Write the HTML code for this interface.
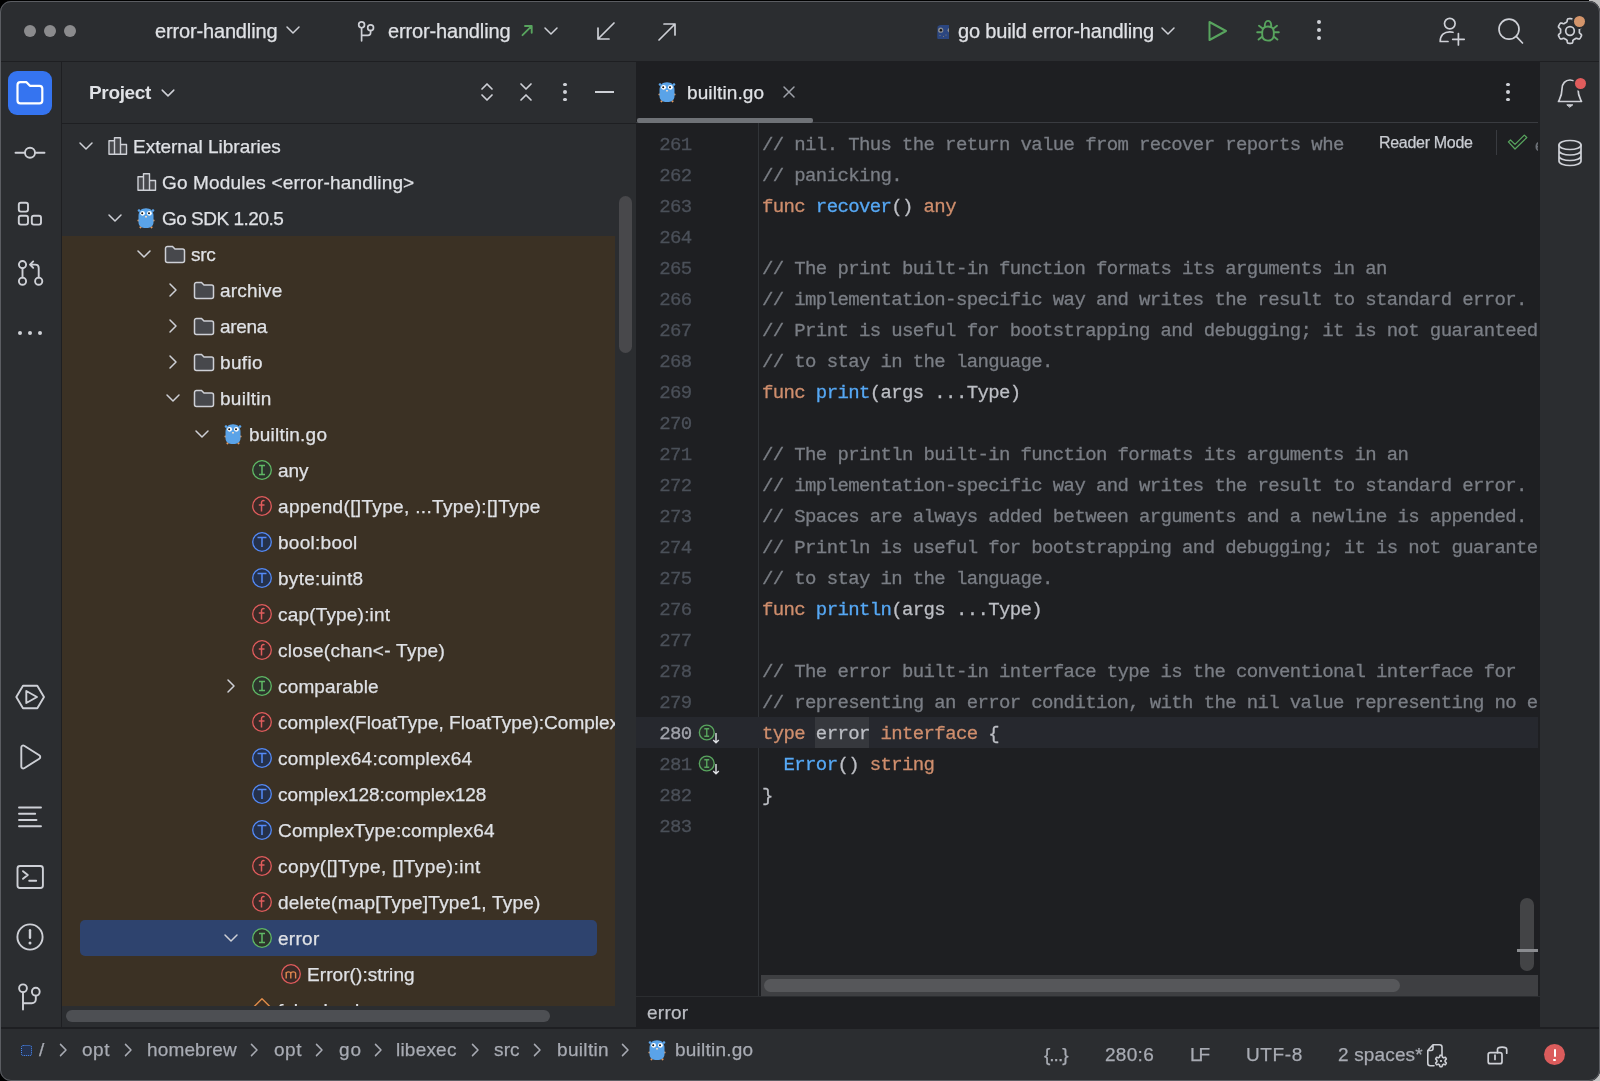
<!DOCTYPE html><html><head><meta charset="utf-8"><style>
*{margin:0;padding:0;box-sizing:border-box}
html,body{width:1600px;height:1081px;overflow:hidden;background:#000}
body{font-family:"Liberation Sans",sans-serif;color:#dfe1e5;position:relative}
.a{position:absolute}
#win{position:absolute;left:0;top:1px;width:1600px;height:1080px;background:#2b2d30;border-radius:11px;overflow:hidden}
#bord{position:absolute;left:0;top:1px;width:1600px;height:1080px;border:1px solid #5b5d62;border-radius:11px;pointer-events:none}
.ui{position:absolute;font-size:19px;white-space:nowrap;line-height:24px;will-change:transform;-webkit-text-stroke:0.25px currentColor}
.mono{font-family:"Liberation Mono",monospace;font-size:19px;letter-spacing:-0.63px;white-space:pre;line-height:31px;will-change:transform;-webkit-text-stroke:0.3px currentColor}
svg{position:absolute;overflow:visible}
.ic{fill:none;stroke:#ced0d6;stroke-width:1.7;stroke-linecap:round;stroke-linejoin:round}
.cm{color:#7a7e85}.kw{color:#cf8e6d}.fn{color:#56a8f5}.tx{color:#bcbec4}
</style></head><body><div style="position:absolute;left:1589px;top:0;width:11px;height:12px;background:#bdbdbd"></div><div style="position:absolute;left:1588px;top:1069px;width:12px;height:12px;background:#c4c4c4"></div><div id="win"><div style="position:absolute;left:0;top:-1px;width:1600px;height:1081px">
<div class="a" style="left:0;top:0;width:1600px;height:61px;background:#2b2d30"></div>
<div class="a" style="left:0;top:61px;width:1600px;height:1px;background:#1e1f22"></div>
<div class="a" style="left:24px;top:25px;width:12px;height:12px;border-radius:6px;background:#8b8b8d"></div>
<div class="a" style="left:44px;top:25px;width:12px;height:12px;border-radius:6px;background:#8b8b8d"></div>
<div class="a" style="left:64px;top:25px;width:12px;height:12px;border-radius:6px;background:#8b8b8d"></div>
<div class="ui" id="t52ea0517" style="left:155px;top:18.07px;font-size:20px;line-height:26px;color:#dfe1e5;font-weight:normal;letter-spacing:-0.154px;">error-handling</div>
<svg class="ic" style="left:283px;top:20px;" width="20" height="20" viewBox="0 0 20 20"><path d="M4 7.0 L10 13.0 L16 7.0" stroke="#ced0d6" stroke-width="1.5"/></svg>
<svg class="ic" style="left:356px;top:20px;" width="22" height="22" viewBox="0 0 22 22"><circle cx="5.6" cy="4.85" r="2.9"/><circle cx="14.6" cy="7.8" r="2.9"/><path d="M5.6 7.75 V20.8 M14.6 10.7 V12.8 C14.6 14.4 13.6 15.4 12 15.4 H5.6"/></svg>
<div class="ui" id="te1d7c44e" style="left:388px;top:18.07px;font-size:20px;line-height:26px;color:#dfe1e5;font-weight:normal;letter-spacing:-0.154px;">error-handling</div>
<svg class="ic" style="left:516px;top:20px;" width="20" height="20" viewBox="0 0 20 20"><path d="M6.5 15.2 L15.5 6.2 M9 6 H15.7 V12.7" stroke="#58a45e" stroke-width="1.9"/></svg>
<svg class="ic" style="left:541.25px;top:21px;" width="20" height="20" viewBox="0 0 20 20"><path d="M4 7.0 L10 13.0 L16 7.0" stroke="#ced0d6" stroke-width="1.5"/></svg>
<svg class="ic" style="left:594px;top:20px;" width="24" height="24" viewBox="0 0 24 24"><path d="M20 3 L4 19 M4 8 V19 H15"/></svg>
<svg class="ic" style="left:655px;top:20px;" width="24" height="24" viewBox="0 0 24 24"><path d="M4 20 L20 4 M9 4 H20 V15"/></svg>
<svg class="" style="left:930px;top:18px;" width="26" height="26" viewBox="0 0 26 26"><path d="M7.5 9 C7.5 8 9 7 11 7 H19 V21 H8 C7.5 21 7.2 20 7.2 19 Z" fill="#2b4680"/><circle cx="10.7" cy="12.2" r="2.6" fill="#8a8b8e"/><circle cx="10.9" cy="12.2" r="1.2" fill="#151515"/><path d="M19 10 A2.6 2.6 0 0 0 19 14.6 Z" fill="#8a8b8e"/><circle cx="10" cy="17.5" r="0.5" fill="#9a8a70"/><circle cx="13.5" cy="18.5" r="0.5" fill="#9a8a70"/><circle cx="16" cy="17" r="0.5" fill="#9a8a70"/></svg>
<div class="ui" id="t1ec3451c" style="left:958px;top:18.07px;font-size:20px;line-height:26px;color:#dfe1e5;font-weight:normal;letter-spacing:-0.182px;">go build error-handling</div>
<svg class="ic" style="left:1158px;top:21px;" width="20" height="20" viewBox="0 0 20 20"><path d="M4 7.0 L10 13.0 L16 7.0" stroke="#ced0d6" stroke-width="1.5"/></svg>
<svg class="ic" style="left:1205px;top:19px;" width="24" height="24" viewBox="0 0 24 24"><path d="M4.5 3 L21 12 L4.5 21 Z" stroke="#58a45e" stroke-width="2"/></svg>
<svg class="ic" style="left:1255px;top:18px;" width="26" height="26" viewBox="0 0 26 26"><path d="M7.2 14.3 C7.2 10.5 9.5 8.5 13 8.5 C16.5 8.5 18.8 10.5 18.8 14.3 V16.5 C18.8 20.3 16.5 22.6 13 22.6 C9.5 22.6 7.2 20.3 7.2 16.5 Z M9.7 8.9 C9.7 5 11 2.9 13 2.9 C15 2.9 16.3 5 16.3 8.9 M4 7.8 L7.6 10.6 M2.2 14.3 H7.2 M3.6 21.6 L7.3 18.6 M22 7.8 L18.4 10.6 M23.8 14.3 H18.8 M22.4 21.6 L18.7 18.6" stroke="#58a45e" stroke-width="1.9"/></svg>
<div class="a" style="left:1317px;top:20px;width:4px;height:4px;border-radius:2px;background:#ced0d6"></div>
<div class="a" style="left:1317px;top:28px;width:4px;height:4px;border-radius:2px;background:#ced0d6"></div>
<div class="a" style="left:1317px;top:36px;width:4px;height:4px;border-radius:2px;background:#ced0d6"></div>
<svg class="ic" style="left:1437px;top:17px;" width="30" height="30" viewBox="0 0 30 30"><circle cx="12.8" cy="6.6" r="5.3"/><path d="M3.2 24.5 C3.2 18 7.5 14.8 12.8 14.8 C14 14.8 15 15 16 15.3 M3.2 24.5 H11 M21.4 16.5 V28 M15.7 22.3 H27.2"/></svg>
<svg class="ic" style="left:1496px;top:17px;" width="30" height="30" viewBox="0 0 30 30"><circle cx="13" cy="12.2" r="10"/><path d="M20.2 19.4 L26.5 26"/></svg>
<svg class="ic" style="left:1555px;top:16px;" width="30" height="30" viewBox="0 0 30 30"><path d="M24.4 15.0 L24.4 15.3 L24.4 15.7 L24.4 16.0 L24.4 16.3 L24.4 16.7 L24.6 17.0 L25.1 17.5 L25.9 18.1 L26.4 18.7 L26.5 19.2 L26.5 19.6 L26.3 20.0 L26.1 20.4 L25.9 20.8 L25.7 21.2 L25.5 21.6 L25.3 21.9 L25.0 22.3 L24.7 22.6 L24.4 22.9 L23.9 23.0 L23.2 22.9 L22.3 22.5 L21.6 22.3 L21.1 22.3 L20.8 22.4 L20.5 22.6 L20.3 22.8 L20.0 23.0 L19.7 23.1 L19.4 23.3 L19.1 23.5 L18.8 23.6 L18.5 23.8 L18.3 24.0 L18.0 24.3 L17.9 25.0 L17.7 26.0 L17.5 26.7 L17.1 27.1 L16.7 27.2 L16.3 27.3 L15.9 27.4 L15.4 27.4 L15.0 27.4 L14.6 27.4 L14.1 27.4 L13.7 27.3 L13.3 27.2 L12.9 27.1 L12.5 26.7 L12.3 26.0 L12.1 25.0 L12.0 24.3 L11.7 24.0 L11.5 23.8 L11.2 23.6 L10.9 23.5 L10.6 23.3 L10.3 23.1 L10.0 23.0 L9.7 22.8 L9.5 22.6 L9.2 22.4 L8.9 22.3 L8.4 22.3 L7.7 22.5 L6.8 22.9 L6.1 23.0 L5.6 22.9 L5.3 22.6 L5.0 22.3 L4.7 21.9 L4.5 21.6 L4.3 21.2 L4.1 20.8 L3.9 20.4 L3.7 20.0 L3.5 19.6 L3.5 19.2 L3.6 18.7 L4.1 18.1 L4.9 17.5 L5.4 17.0 L5.6 16.7 L5.6 16.3 L5.6 16.0 L5.6 15.7 L5.6 15.3 L5.6 15.0 L5.6 14.7 L5.6 14.3 L5.6 14.0 L5.6 13.7 L5.6 13.3 L5.4 13.0 L4.9 12.5 L4.1 11.9 L3.6 11.3 L3.5 10.8 L3.5 10.4 L3.7 10.0 L3.9 9.6 L4.1 9.2 L4.3 8.8 L4.5 8.4 L4.7 8.1 L5.0 7.7 L5.3 7.4 L5.6 7.1 L6.1 7.0 L6.8 7.1 L7.7 7.5 L8.4 7.7 L8.9 7.7 L9.2 7.6 L9.5 7.4 L9.7 7.2 L10.0 7.0 L10.3 6.9 L10.6 6.7 L10.9 6.5 L11.2 6.4 L11.5 6.2 L11.7 6.0 L12.0 5.7 L12.1 5.0 L12.3 4.0 L12.5 3.3 L12.9 2.9 L13.3 2.8 L13.7 2.7 L14.1 2.6 L14.6 2.6 L15.0 2.6 L15.4 2.6 L15.9 2.6 L16.3 2.7 L16.7 2.8 L17.1 2.9 L17.5 3.3 L17.7 4.0 L17.9 5.0 L18.0 5.7 L18.3 6.0 L18.5 6.2 L18.8 6.4 L19.1 6.5 L19.4 6.7 L19.7 6.9 L20.0 7.0 L20.3 7.2 L20.5 7.4 L20.8 7.6 L21.1 7.7 L21.6 7.7 L22.3 7.5 L23.2 7.1 L23.9 7.0 L24.4 7.1 L24.7 7.4 L25.0 7.7 L25.3 8.1 L25.5 8.4 L25.7 8.8 L25.9 9.2 L26.1 9.6 L26.3 10.0 L26.5 10.4 L26.5 10.8 L26.4 11.3 L25.9 11.9 L25.1 12.5 L24.6 13.0 L24.4 13.3 L24.4 13.7 L24.4 14.0 L24.4 14.3 L24.4 14.7 Z"/><circle cx="15" cy="15" r="4.3"/></svg>
<div class="a" style="left:1574px;top:15.5px;width:11px;height:11px;border-radius:6px;background:#d4956b;box-shadow:0 0 0 2px #2b2d30"></div>
<div class="a" style="left:61px;top:61px;width:1px;height:967px;background:#1e1f22"></div>
<div class="a" style="left:8px;top:71px;width:44px;height:44px;border-radius:9px;background:#3574f0"></div>
<svg class="ic" style="left:0;top:0;stroke-width:1.9" width="62" height="1081" viewBox="0 0 62 1081"><path d="M17.5 85 a2.8 2.8 0 0 1 2.8 -2.8 h6.2 l3.4 3.6 h9.6 a2.8 2.8 0 0 1 2.8 2.8 v12 a2.8 2.8 0 0 1 -2.8 2.8 h-19.2 a2.8 2.8 0 0 1 -2.8 -2.8 Z" stroke="#ffffff" stroke-width="2.2"/><circle cx="30" cy="152.8" r="5"/><path d="M15.5 152.8 H25 M35 152.8 H44.5"/><rect x="18.8" y="202.8" width="9.2" height="8.8" rx="2"/><rect x="18.8" y="215.8" width="9.2" height="8.8" rx="2"/><rect x="31.8" y="215.8" width="9.2" height="8.8" rx="2"/><circle cx="22.5" cy="264.6" r="3.6"/><circle cx="22.5" cy="281.2" r="3.6"/><circle cx="38.7" cy="281.2" r="3.6"/><path d="M22.5 268.2 V277.6 M38.7 277.6 V268 C38.7 265.8 37.5 264.6 35.3 264.6 H30.2 M33.2 261.4 L30 264.6 L33.2 267.8"/><path d="M23 685.8 H37.3 L44 697 L37.3 708.2 H23 L16.3 697 Z M26.3 691 L37 697 L26.3 703 Z"/><path d="M21.3 747.5 C21.3 745.8 22.8 745 24.2 745.8 L39.3 755.3 C40.6 756.1 40.6 757.9 39.3 758.7 L24.2 768.2 C22.8 769 21.3 768.2 21.3 766.5 Z"/><path d="M19 807.5 H41 M19 813.7 H35.2 M19 820 H36.5 M19 826.3 H41"/><rect x="17.5" y="866" width="25.4" height="22" rx="2.5"/><path d="M23 871.2 L27.8 875 L23 878.8 M29.2 880.8 H36.2"/><circle cx="30" cy="937" r="12.6"/><path d="M30 930.3 V937.8" stroke-width="2.4"/><circle cx="30" cy="943" r="1.5" fill="#ced0d6" stroke="none"/><circle cx="23" cy="988.3" r="3.9"/><circle cx="35.8" cy="991.7" r="3.9"/><path d="M23 992.2 V1009.5 M35.8 995.6 V999.3 C35.8 1001.6 34.1 1003.3 31.8 1003.3 H23"/></svg>
<div class="a" style="left:17.8px;top:330.6px;width:4.4px;height:4.4px;border-radius:3px;background:#ced0d6"></div>
<div class="a" style="left:27.8px;top:330.6px;width:4.4px;height:4.4px;border-radius:3px;background:#ced0d6"></div>
<div class="a" style="left:37.8px;top:330.6px;width:4.4px;height:4.4px;border-radius:3px;background:#ced0d6"></div>
<div class="a" style="left:62px;top:123px;width:574px;height:1px;background:#1e1f22"></div>
<div class="ui" id="td271fe96" style="left:89px;top:80.42px;font-size:19px;line-height:25px;color:#dfe1e5;font-weight:bold;-webkit-text-stroke:0;letter-spacing:-0.333px;">Project</div>
<svg class="ic" style="left:158px;top:83px;" width="20" height="20" viewBox="0 0 20 20"><path d="M4.2 7.1 L10 12.9 L15.8 7.1" stroke="#ced0d6" stroke-width="1.5"/></svg>
<svg class="ic" style="left:475px;top:80px;" width="24" height="24" viewBox="0 0 24 24"><path d="M7 9 L12 4 L17 9 M7 15 L12 20 L17 15"/></svg>
<svg class="ic" style="left:514px;top:80px;" width="24" height="24" viewBox="0 0 24 24"><path d="M7 4 L12 9 L17 4 M7 20 L12 15 L17 20"/></svg>
<div class="a" style="left:563.2px;top:82.60000000000001px;width:3.6px;height:3.6px;border-radius:2px;background:#ced0d6"></div>
<div class="a" style="left:563.2px;top:90.2px;width:3.6px;height:3.6px;border-radius:2px;background:#ced0d6"></div>
<div class="a" style="left:563.2px;top:97.8px;width:3.6px;height:3.6px;border-radius:2px;background:#ced0d6"></div>
<div class="a" style="left:594.5px;top:91px;width:19px;height:1.8px;background:#ced0d6"></div>
<div class="a" style="left:62px;top:236px;width:553px;height:770px;background:#3b3124"></div>
<div class="a" style="left:80px;top:920px;width:517px;height:36px;border-radius:5px;background:#2e436e"></div>
<div class="a" style="left:619px;top:196px;width:13px;height:157px;border-radius:6.5px;background:#48484b"></div>
<div class="a" style="left:66px;top:1010px;width:484px;height:12px;border-radius:6px;background:#4d4f53"></div>
<div class="a" style="left:62px;top:124px;width:553px;height:882px;overflow:hidden">
<svg class="ic" style="left:14px;top:12px;" width="20" height="20" viewBox="0 0 20 20"><path d="M4 7.0 L10 13.0 L16 7.0" stroke="#ced0d6" stroke-width="1.5"/></svg>
<svg class="" style="left:46px;top:12.5px;" width="20" height="18" viewBox="0 0 20 18"><path d="M1 3.8 h5.5 v13.5 h-5.5 Z M6.5 0.8 h6 v16.5 h-6 Z M12.5 7.5 h6 v9.8 h-6 Z" fill="#47484c" stroke="#ced0d6" stroke-width="1.4" stroke-linejoin="round"/></svg>
<div class="ui" id="t2b8e03c5" style="left:71px;top:9.92px;font-size:19px;line-height:25px;color:#dfe1e5;font-weight:normal;letter-spacing:0.000px;">External Libraries</div>
<svg class="" style="left:75px;top:48.5px;" width="20" height="18" viewBox="0 0 20 18"><path d="M1 3.8 h5.5 v13.5 h-5.5 Z M6.5 0.8 h6 v16.5 h-6 Z M12.5 7.5 h6 v9.8 h-6 Z" fill="#47484c" stroke="#ced0d6" stroke-width="1.4" stroke-linejoin="round"/></svg>
<div class="ui" id="t86f1051d" style="left:100px;top:45.92px;font-size:19px;line-height:25px;color:#dfe1e5;font-weight:normal;letter-spacing:0.154px;">Go Modules &lt;error-handling&gt;</div>
<svg class="ic" style="left:43px;top:84px;" width="20" height="20" viewBox="0 0 20 20"><path d="M4 7.0 L10 13.0 L16 7.0" stroke="#ced0d6" stroke-width="1.5"/></svg>
<svg class="" style="left:75px;top:84px;" width="18" height="20" viewBox="0 0 18 20"><circle cx="2" cy="2.5" r="1.3" fill="#5ba5ea"/><circle cx="16" cy="2.5" r="1.3" fill="#5ba5ea"/><circle cx="1.5" cy="12.5" r="1.1" fill="#e39a5f"/><circle cx="16.5" cy="12.5" r="1.1" fill="#e39a5f"/><circle cx="3.5" cy="19.3" r="1.1" fill="#e39a5f"/><circle cx="14.5" cy="19.3" r="1.1" fill="#e39a5f"/><path d="M9 0.3 C13.5 0.3 16.5 3 16.5 8 V14 C16.5 18 13.5 20 9 20 C4.5 20 1.5 18 1.5 14 V8 C1.5 3 4.5 0.3 9 0.3 Z" fill="#5aa3e8"/><circle cx="5.6" cy="5.3" r="2.4" fill="#fff"/><circle cx="12.4" cy="5.3" r="2.4" fill="#fff"/><circle cx="5.2" cy="5.3" r="1" fill="#111"/><circle cx="12" cy="5.3" r="1" fill="#111"/><path d="M8 8 h2 v1.5 h-2 Z" fill="#e8d8c8"/></svg>
<div class="ui" id="t953a8371" style="left:100px;top:81.92px;font-size:19px;line-height:25px;color:#dfe1e5;font-weight:normal;letter-spacing:-0.500px;">Go SDK 1.20.5</div>
<svg class="ic" style="left:72px;top:120px;" width="20" height="20" viewBox="0 0 20 20"><path d="M4 7.0 L10 13.0 L16 7.0" stroke="#ced0d6" stroke-width="1.5"/></svg>
<svg class="" style="left:102px;top:121px;" width="22" height="18" viewBox="0 0 22 18"><path d="M1.5 3.5 a2 2 0 0 1 2 -2 h5 l2.5 2.5 h7.5 a2 2 0 0 1 2 2 v9.5 a2 2 0 0 1 -2 2 h-15 a2 2 0 0 1 -2 -2 Z" fill="#47484c" stroke="#ced0d6" stroke-width="1.5"/></svg>
<div class="ui" id="tddd6fa2c" style="left:129px;top:117.92px;font-size:19px;line-height:25px;color:#dfe1e5;font-weight:normal;letter-spacing:-0.300px;">src</div>
<svg class="ic" style="left:101px;top:156px;" width="20" height="20" viewBox="0 0 20 20"><path d="M7.0 4 L13.0 10 L7.0 16" stroke="#ced0d6" stroke-width="1.5"/></svg>
<svg class="" style="left:131px;top:157px;" width="22" height="18" viewBox="0 0 22 18"><path d="M1.5 3.5 a2 2 0 0 1 2 -2 h5 l2.5 2.5 h7.5 a2 2 0 0 1 2 2 v9.5 a2 2 0 0 1 -2 2 h-15 a2 2 0 0 1 -2 -2 Z" fill="#47484c" stroke="#ced0d6" stroke-width="1.5"/></svg>
<div class="ui" id="te6ce1675" style="left:158px;top:153.92px;font-size:19px;line-height:25px;color:#dfe1e5;font-weight:normal;letter-spacing:0.183px;">archive</div>
<svg class="ic" style="left:101px;top:192px;" width="20" height="20" viewBox="0 0 20 20"><path d="M7.0 4 L13.0 10 L7.0 16" stroke="#ced0d6" stroke-width="1.5"/></svg>
<svg class="" style="left:131px;top:193px;" width="22" height="18" viewBox="0 0 22 18"><path d="M1.5 3.5 a2 2 0 0 1 2 -2 h5 l2.5 2.5 h7.5 a2 2 0 0 1 2 2 v9.5 a2 2 0 0 1 -2 2 h-15 a2 2 0 0 1 -2 -2 Z" fill="#47484c" stroke="#ced0d6" stroke-width="1.5"/></svg>
<div class="ui" id="tbfab9cfe" style="left:158px;top:189.92px;font-size:19px;line-height:25px;color:#dfe1e5;font-weight:normal;letter-spacing:-0.350px;">arena</div>
<svg class="ic" style="left:101px;top:228px;" width="20" height="20" viewBox="0 0 20 20"><path d="M7.0 4 L13.0 10 L7.0 16" stroke="#ced0d6" stroke-width="1.5"/></svg>
<svg class="" style="left:131px;top:229px;" width="22" height="18" viewBox="0 0 22 18"><path d="M1.5 3.5 a2 2 0 0 1 2 -2 h5 l2.5 2.5 h7.5 a2 2 0 0 1 2 2 v9.5 a2 2 0 0 1 -2 2 h-15 a2 2 0 0 1 -2 -2 Z" fill="#47484c" stroke="#ced0d6" stroke-width="1.5"/></svg>
<div class="ui" id="t3913317d" style="left:158px;top:225.92px;font-size:19px;line-height:25px;color:#dfe1e5;font-weight:normal;letter-spacing:0.350px;">bufio</div>
<svg class="ic" style="left:101px;top:264px;" width="20" height="20" viewBox="0 0 20 20"><path d="M4 7.0 L10 13.0 L16 7.0" stroke="#ced0d6" stroke-width="1.5"/></svg>
<svg class="" style="left:131px;top:265px;" width="22" height="18" viewBox="0 0 22 18"><path d="M1.5 3.5 a2 2 0 0 1 2 -2 h5 l2.5 2.5 h7.5 a2 2 0 0 1 2 2 v9.5 a2 2 0 0 1 -2 2 h-15 a2 2 0 0 1 -2 -2 Z" fill="#47484c" stroke="#ced0d6" stroke-width="1.5"/></svg>
<div class="ui" id="ta797316f" style="left:158px;top:261.92px;font-size:19px;line-height:25px;color:#dfe1e5;font-weight:normal;letter-spacing:0.283px;">builtin</div>
<svg class="ic" style="left:130px;top:300px;" width="20" height="20" viewBox="0 0 20 20"><path d="M4 7.0 L10 13.0 L16 7.0" stroke="#ced0d6" stroke-width="1.5"/></svg>
<svg class="" style="left:162px;top:300px;" width="18" height="20" viewBox="0 0 18 20"><circle cx="2" cy="2.5" r="1.3" fill="#5ba5ea"/><circle cx="16" cy="2.5" r="1.3" fill="#5ba5ea"/><circle cx="1.5" cy="12.5" r="1.1" fill="#e39a5f"/><circle cx="16.5" cy="12.5" r="1.1" fill="#e39a5f"/><circle cx="3.5" cy="19.3" r="1.1" fill="#e39a5f"/><circle cx="14.5" cy="19.3" r="1.1" fill="#e39a5f"/><path d="M9 0.3 C13.5 0.3 16.5 3 16.5 8 V14 C16.5 18 13.5 20 9 20 C4.5 20 1.5 18 1.5 14 V8 C1.5 3 4.5 0.3 9 0.3 Z" fill="#5aa3e8"/><circle cx="5.6" cy="5.3" r="2.4" fill="#fff"/><circle cx="12.4" cy="5.3" r="2.4" fill="#fff"/><circle cx="5.2" cy="5.3" r="1" fill="#111"/><circle cx="12" cy="5.3" r="1" fill="#111"/><path d="M8 8 h2 v1.5 h-2 Z" fill="#e8d8c8"/></svg>
<div class="ui" id="tedc53968" style="left:187px;top:297.92px;font-size:19px;line-height:25px;color:#dfe1e5;font-weight:normal;letter-spacing:0.211px;">builtin.go</div>
<svg class="" style="left:190px;top:336px;" width="20" height="20" viewBox="0 0 20 20"><circle cx="10" cy="10" r="9.3" fill="#2c332b" stroke="#5fb865" stroke-width="1.3"/><path d="M7 5.5 H13 M10 5.5 V14.5 M7 14.5 H13" stroke="#5fb865" stroke-width="1.5" fill="none"/></svg>
<div class="ui" id="td499290e" style="left:216px;top:333.92px;font-size:19px;line-height:25px;color:#dfe1e5;font-weight:normal;letter-spacing:-0.100px;">any</div>
<svg class="" style="left:190px;top:372px;" width="20" height="20" viewBox="0 0 20 20"><circle cx="10" cy="10" r="9.3" fill="#3a2a26" stroke="#e05c5c" stroke-width="1.3"/><path d="M12.5 5 C11.5 4.3 9.5 4.4 9.5 6.5 V15.5 M6.8 9 H12.5" stroke="#e05c5c" stroke-width="1.5" fill="none"/></svg>
<div class="ui" id="t2e0fd31a" style="left:216px;top:369.92px;font-size:19px;line-height:25px;color:#dfe1e5;font-weight:normal;letter-spacing:0.345px;">append([]Type, ...Type):[]Type</div>
<svg class="" style="left:190px;top:408px;" width="20" height="20" viewBox="0 0 20 20"><circle cx="10" cy="10" r="9.3" fill="#25314b" stroke="#548af7" stroke-width="1.3"/><path d="M5.5 5.5 H14.5 M10 5.5 V15" stroke="#548af7" stroke-width="1.5" fill="none"/></svg>
<div class="ui" id="tcdcd7597" style="left:216px;top:405.92px;font-size:19px;line-height:25px;color:#dfe1e5;font-weight:normal;letter-spacing:0.275px;">bool:bool</div>
<svg class="" style="left:190px;top:444px;" width="20" height="20" viewBox="0 0 20 20"><circle cx="10" cy="10" r="9.3" fill="#25314b" stroke="#548af7" stroke-width="1.3"/><path d="M5.5 5.5 H14.5 M10 5.5 V15" stroke="#548af7" stroke-width="1.5" fill="none"/></svg>
<div class="ui" id="tc299bbd0" style="left:216px;top:441.92px;font-size:19px;line-height:25px;color:#dfe1e5;font-weight:normal;letter-spacing:0.300px;">byte:uint8</div>
<svg class="" style="left:190px;top:480px;" width="20" height="20" viewBox="0 0 20 20"><circle cx="10" cy="10" r="9.3" fill="#3a2a26" stroke="#e05c5c" stroke-width="1.3"/><path d="M12.5 5 C11.5 4.3 9.5 4.4 9.5 6.5 V15.5 M6.8 9 H12.5" stroke="#e05c5c" stroke-width="1.5" fill="none"/></svg>
<div class="ui" id="t53f250b2" style="left:216px;top:477.92px;font-size:19px;line-height:25px;color:#dfe1e5;font-weight:normal;letter-spacing:0.183px;">cap(Type):int</div>
<svg class="" style="left:190px;top:516px;" width="20" height="20" viewBox="0 0 20 20"><circle cx="10" cy="10" r="9.3" fill="#3a2a26" stroke="#e05c5c" stroke-width="1.3"/><path d="M12.5 5 C11.5 4.3 9.5 4.4 9.5 6.5 V15.5 M6.8 9 H12.5" stroke="#e05c5c" stroke-width="1.5" fill="none"/></svg>
<div class="ui" id="t64e650c2" style="left:216px;top:513.92px;font-size:19px;line-height:25px;color:#dfe1e5;font-weight:normal;letter-spacing:0.294px;">close(chan&lt;- Type)</div>
<svg class="ic" style="left:159px;top:552px;" width="20" height="20" viewBox="0 0 20 20"><path d="M7.0 4 L13.0 10 L7.0 16" stroke="#ced0d6" stroke-width="1.5"/></svg>
<svg class="" style="left:190px;top:552px;" width="20" height="20" viewBox="0 0 20 20"><circle cx="10" cy="10" r="9.3" fill="#2c332b" stroke="#5fb865" stroke-width="1.3"/><path d="M7 5.5 H13 M10 5.5 V14.5 M7 14.5 H13" stroke="#5fb865" stroke-width="1.5" fill="none"/></svg>
<div class="ui" id="td97ae340" style="left:216px;top:549.92px;font-size:19px;line-height:25px;color:#dfe1e5;font-weight:normal;letter-spacing:0.156px;">comparable</div>
<svg class="" style="left:190px;top:588px;" width="20" height="20" viewBox="0 0 20 20"><circle cx="10" cy="10" r="9.3" fill="#3a2a26" stroke="#e05c5c" stroke-width="1.3"/><path d="M12.5 5 C11.5 4.3 9.5 4.4 9.5 6.5 V15.5 M6.8 9 H12.5" stroke="#e05c5c" stroke-width="1.5" fill="none"/></svg>
<div class="ui" id="t4efb7966" style="left:216px;top:585.92px;font-size:19px;line-height:25px;color:#dfe1e5;font-weight:normal;">complex(FloatType, FloatType):ComplexType</div>
<svg class="" style="left:190px;top:624px;" width="20" height="20" viewBox="0 0 20 20"><circle cx="10" cy="10" r="9.3" fill="#25314b" stroke="#548af7" stroke-width="1.3"/><path d="M5.5 5.5 H14.5 M10 5.5 V15" stroke="#548af7" stroke-width="1.5" fill="none"/></svg>
<div class="ui" id="t852b9943" style="left:216px;top:621.92px;font-size:19px;line-height:25px;color:#dfe1e5;font-weight:normal;letter-spacing:0.278px;">complex64:complex64</div>
<svg class="" style="left:190px;top:660px;" width="20" height="20" viewBox="0 0 20 20"><circle cx="10" cy="10" r="9.3" fill="#25314b" stroke="#548af7" stroke-width="1.3"/><path d="M5.5 5.5 H14.5 M10 5.5 V15" stroke="#548af7" stroke-width="1.5" fill="none"/></svg>
<div class="ui" id="t49ba35dc" style="left:216px;top:657.92px;font-size:19px;line-height:25px;color:#dfe1e5;font-weight:normal;letter-spacing:-0.090px;">complex128:complex128</div>
<svg class="" style="left:190px;top:696px;" width="20" height="20" viewBox="0 0 20 20"><circle cx="10" cy="10" r="9.3" fill="#25314b" stroke="#548af7" stroke-width="1.3"/><path d="M5.5 5.5 H14.5 M10 5.5 V15" stroke="#548af7" stroke-width="1.5" fill="none"/></svg>
<div class="ui" id="tdd19f5a2" style="left:216px;top:693.92px;font-size:19px;line-height:25px;color:#dfe1e5;font-weight:normal;letter-spacing:0.160px;">ComplexType:complex64</div>
<svg class="" style="left:190px;top:732px;" width="20" height="20" viewBox="0 0 20 20"><circle cx="10" cy="10" r="9.3" fill="#3a2a26" stroke="#e05c5c" stroke-width="1.3"/><path d="M12.5 5 C11.5 4.3 9.5 4.4 9.5 6.5 V15.5 M6.8 9 H12.5" stroke="#e05c5c" stroke-width="1.5" fill="none"/></svg>
<div class="ui" id="tca35cbd5" style="left:216px;top:729.92px;font-size:19px;line-height:25px;color:#dfe1e5;font-weight:normal;letter-spacing:0.435px;">copy([]Type, []Type):int</div>
<svg class="" style="left:190px;top:768px;" width="20" height="20" viewBox="0 0 20 20"><circle cx="10" cy="10" r="9.3" fill="#3a2a26" stroke="#e05c5c" stroke-width="1.3"/><path d="M12.5 5 C11.5 4.3 9.5 4.4 9.5 6.5 V15.5 M6.8 9 H12.5" stroke="#e05c5c" stroke-width="1.5" fill="none"/></svg>
<div class="ui" id="tc830f89b" style="left:216px;top:765.92px;font-size:19px;line-height:25px;color:#dfe1e5;font-weight:normal;letter-spacing:0.222px;">delete(map[Type]Type1, Type)</div>
<svg class="ic" style="left:159px;top:804px;" width="20" height="20" viewBox="0 0 20 20"><path d="M4 7.0 L10 13.0 L16 7.0" stroke="#ced0d6" stroke-width="1.5"/></svg>
<svg class="" style="left:190px;top:804px;" width="20" height="20" viewBox="0 0 20 20"><circle cx="10" cy="10" r="9.3" fill="#2c332b" stroke="#5fb865" stroke-width="1.3"/><path d="M7 5.5 H13 M10 5.5 V14.5 M7 14.5 H13" stroke="#5fb865" stroke-width="1.5" fill="none"/></svg>
<div class="ui" id="t2bb3469e" style="left:216px;top:801.92px;font-size:19px;line-height:25px;color:#dfe1e5;font-weight:normal;letter-spacing:0.300px;">error</div>
<svg class="" style="left:219px;top:840px;" width="20" height="20" viewBox="0 0 20 20"><circle cx="10" cy="10" r="9.3" fill="#3a2a26" stroke="#e05c5c" stroke-width="1.3"/><path d="M5.2 14.5 V8 M5.2 9.5 C5.2 7.6 9.8 7.2 9.8 9.5 V14.5 M9.8 9.5 C9.8 7.6 14.6 7.2 14.6 9.5 V14.5" stroke="#e0874f" stroke-width="1.4" fill="none"/></svg>
<div class="ui" id="t0f182b0c" style="left:245px;top:837.92px;font-size:19px;line-height:25px;color:#dfe1e5;font-weight:normal;letter-spacing:0.077px;">Error():string</div>
<svg class="" style="left:190px;top:874px;" width="20" height="20" viewBox="0 0 20 20"><path d="M10 0.8 L19.3 10 L10 19.2 L0.7 10 Z" fill="#3a2d22" stroke="#e08c4a" stroke-width="1.4" stroke-linejoin="round"/><path d="M6 13 H14" stroke="#e08c4a" stroke-width="1.4"/></svg>
<div class="ui" id="td1c26c69" style="left:216px;top:873.92px;font-size:19px;line-height:25px;color:#dfe1e5;font-weight:normal;">false:bool</div>
</div>
<div class="a" style="left:636px;top:62px;width:904px;height:966px;background:#1e1f22"></div>
<div class="a" style="left:636px;top:122px;width:902px;height:1px;background:#393b40"></div>
<svg class="" style="left:658px;top:81.5px;" width="18" height="20" viewBox="0 0 18 20"><circle cx="2" cy="2.5" r="1.3" fill="#5ba5ea"/><circle cx="16" cy="2.5" r="1.3" fill="#5ba5ea"/><circle cx="1.5" cy="12.5" r="1.1" fill="#e39a5f"/><circle cx="16.5" cy="12.5" r="1.1" fill="#e39a5f"/><circle cx="3.5" cy="19.3" r="1.1" fill="#e39a5f"/><circle cx="14.5" cy="19.3" r="1.1" fill="#e39a5f"/><path d="M9 0.3 C13.5 0.3 16.5 3 16.5 8 V14 C16.5 18 13.5 20 9 20 C4.5 20 1.5 18 1.5 14 V8 C1.5 3 4.5 0.3 9 0.3 Z" fill="#5aa3e8"/><circle cx="5.6" cy="5.3" r="2.4" fill="#fff"/><circle cx="12.4" cy="5.3" r="2.4" fill="#fff"/><circle cx="5.2" cy="5.3" r="1" fill="#111"/><circle cx="12" cy="5.3" r="1" fill="#111"/><path d="M8 8 h2 v1.5 h-2 Z" fill="#e8d8c8"/></svg>
<div class="ui" id="tecb2bb8a" style="left:687px;top:79.92px;font-size:19px;line-height:25px;color:#dfe1e5;font-weight:normal;letter-spacing:0.111px;">builtin.go</div>
<svg class="ic" style="left:779px;top:82px;" width="20" height="20" viewBox="0 0 20 20"><path d="M5 5 L15 15 M15 5 L5 15" stroke="#9da0a8" stroke-width="1.5"/></svg>
<div class="a" style="left:637px;top:118px;width:176px;height:4.5px;border-radius:2px;background:#6f7277"></div>
<div class="a" style="left:1506.1px;top:82.5px;width:3.8px;height:3.8px;border-radius:2px;background:#ced0d6"></div>
<div class="a" style="left:1506.1px;top:90.1px;width:3.8px;height:3.8px;border-radius:2px;background:#ced0d6"></div>
<div class="a" style="left:1506.1px;top:97.69999999999999px;width:3.8px;height:3.8px;border-radius:2px;background:#ced0d6"></div>
<div class="a" style="left:758px;top:123px;width:1px;height:873px;background:#313438"></div>
<div class="a" style="left:636px;top:717px;width:902px;height:31px;background:#26282e"></div>
<div class="a" style="left:815px;top:717px;width:54px;height:31px;background:#36383d"></div>
<div class="a" style="left:636px;top:128px;width:902px;height:847px;overflow:hidden">
<div class="mono a" style="left:0;width:55.5px;text-align:right;top:1.7px;color:#4b5059">261</div>
<div class="mono a" style="left:126px;top:1.7px"><span class="cm">// nil. Thus the return value from recover reports whe</span></div>
<div class="mono a" style="left:0;width:55.5px;text-align:right;top:32.7px;color:#4b5059">262</div>
<div class="mono a" style="left:126px;top:32.7px"><span class="cm">// panicking.</span></div>
<div class="mono a" style="left:0;width:55.5px;text-align:right;top:63.7px;color:#4b5059">263</div>
<div class="mono a" style="left:126px;top:63.7px"><span class="kw">func </span><span class="fn">recover</span><span class="tx">() </span><span class="kw">any</span></div>
<div class="mono a" style="left:0;width:55.5px;text-align:right;top:94.7px;color:#4b5059">264</div>
<div class="mono a" style="left:126px;top:94.7px"></div>
<div class="mono a" style="left:0;width:55.5px;text-align:right;top:125.7px;color:#4b5059">265</div>
<div class="mono a" style="left:126px;top:125.7px"><span class="cm">// The print built-in function formats its arguments in an</span></div>
<div class="mono a" style="left:0;width:55.5px;text-align:right;top:156.7px;color:#4b5059">266</div>
<div class="mono a" style="left:126px;top:156.7px"><span class="cm">// implementation-specific way and writes the result to standard error.</span></div>
<div class="mono a" style="left:0;width:55.5px;text-align:right;top:187.7px;color:#4b5059">267</div>
<div class="mono a" style="left:126px;top:187.7px"><span class="cm">// Print is useful for bootstrapping and debugging; it is not guaranteed</span></div>
<div class="mono a" style="left:0;width:55.5px;text-align:right;top:218.7px;color:#4b5059">268</div>
<div class="mono a" style="left:126px;top:218.7px"><span class="cm">// to stay in the language.</span></div>
<div class="mono a" style="left:0;width:55.5px;text-align:right;top:249.7px;color:#4b5059">269</div>
<div class="mono a" style="left:126px;top:249.7px"><span class="kw">func </span><span class="fn">print</span><span class="tx">(args ...Type)</span></div>
<div class="mono a" style="left:0;width:55.5px;text-align:right;top:280.7px;color:#4b5059">270</div>
<div class="mono a" style="left:126px;top:280.7px"></div>
<div class="mono a" style="left:0;width:55.5px;text-align:right;top:311.7px;color:#4b5059">271</div>
<div class="mono a" style="left:126px;top:311.7px"><span class="cm">// The println built-in function formats its arguments in an</span></div>
<div class="mono a" style="left:0;width:55.5px;text-align:right;top:342.7px;color:#4b5059">272</div>
<div class="mono a" style="left:126px;top:342.7px"><span class="cm">// implementation-specific way and writes the result to standard error.</span></div>
<div class="mono a" style="left:0;width:55.5px;text-align:right;top:373.7px;color:#4b5059">273</div>
<div class="mono a" style="left:126px;top:373.7px"><span class="cm">// Spaces are always added between arguments and a newline is appended.</span></div>
<div class="mono a" style="left:0;width:55.5px;text-align:right;top:404.7px;color:#4b5059">274</div>
<div class="mono a" style="left:126px;top:404.7px"><span class="cm">// Println is useful for bootstrapping and debugging; it is not guaranteed</span></div>
<div class="mono a" style="left:0;width:55.5px;text-align:right;top:435.7px;color:#4b5059">275</div>
<div class="mono a" style="left:126px;top:435.7px"><span class="cm">// to stay in the language.</span></div>
<div class="mono a" style="left:0;width:55.5px;text-align:right;top:466.7px;color:#4b5059">276</div>
<div class="mono a" style="left:126px;top:466.7px"><span class="kw">func </span><span class="fn">println</span><span class="tx">(args ...Type)</span></div>
<div class="mono a" style="left:0;width:55.5px;text-align:right;top:497.7px;color:#4b5059">277</div>
<div class="mono a" style="left:126px;top:497.7px"></div>
<div class="mono a" style="left:0;width:55.5px;text-align:right;top:528.7px;color:#4b5059">278</div>
<div class="mono a" style="left:126px;top:528.7px"><span class="cm">// The error built-in interface type is the conventional interface for</span></div>
<div class="mono a" style="left:0;width:55.5px;text-align:right;top:559.7px;color:#4b5059">279</div>
<div class="mono a" style="left:126px;top:559.7px"><span class="cm">// representing an error condition, with the nil value representing no error.</span></div>
<div class="mono a" style="left:0;width:55.5px;text-align:right;top:590.7px;color:#a1a3ab">280</div>
<div class="mono a" style="left:126px;top:590.7px"><span class="kw">type </span><span class="tx">error </span><span class="kw">interface </span><span class="tx">{</span></div>
<div class="mono a" style="left:0;width:55.5px;text-align:right;top:621.7px;color:#4b5059">281</div>
<div class="mono a" style="left:126px;top:621.7px"><span class="tx">  </span><span class="fn">Error</span><span class="tx">() </span><span class="kw">string</span></div>
<div class="mono a" style="left:0;width:55.5px;text-align:right;top:652.7px;color:#4b5059">282</div>
<div class="mono a" style="left:126px;top:652.7px"><span class="tx">}</span></div>
<div class="mono a" style="left:0;width:55.5px;text-align:right;top:683.7px;color:#4b5059">283</div>
<div class="mono a" style="left:126px;top:683.7px"></div>
</div>
<svg class="" style="left:698px;top:723px;" width="26" height="22" viewBox="0 0 26 22"><circle cx="8.75" cy="9.5" r="7.4" fill="#26302a" stroke="#58a45e" stroke-width="1.4"/><path d="M6.3 5.8 H11.2 M8.75 5.8 V13.2 M6.3 13.2 H11.2" stroke="#58a45e" stroke-width="1.4" fill="none"/><path d="M18 10 V19.8 M15.2 17 L18 19.8 L20.8 17" stroke="#dfe1e5" stroke-width="1.4" fill="none"/></svg>
<svg class="" style="left:698px;top:754px;" width="26" height="22" viewBox="0 0 26 22"><circle cx="8.75" cy="9.5" r="7.4" fill="#26302a" stroke="#58a45e" stroke-width="1.4"/><path d="M6.3 5.8 H11.2 M8.75 5.8 V13.2 M6.3 13.2 H11.2" stroke="#58a45e" stroke-width="1.4" fill="none"/><path d="M18 10 V19.8 M15.2 17 L18 19.8 L20.8 17" stroke="#dfe1e5" stroke-width="1.4" fill="none"/></svg>
<div class="a" style="left:1352px;top:128px;width:186px;height:31px;background:#1e1f22"></div>
<div class="ui" id="t9a79bc33" style="left:1379px;top:131.96px;font-size:16px;line-height:21px;color:#c9ccd2;font-weight:normal;letter-spacing:-0.300px;">Reader Mode</div>
<div class="a" style="left:1496px;top:130px;width:1px;height:25px;background:#393b40"></div>
<svg class="" style="left:1500px;top:128px;" width="30" height="30" viewBox="0 0 30 30"><path d="M8.4 13.9 L10.5 12 L15 16.4 L24.3 7.1 L26.8 9.5 L15 21 Z" stroke="#58a45e" stroke-width="1.25" fill="none" stroke-linejoin="round"/></svg>
<div class="a" style="left:1534.5px;top:128px;width:3.5px;height:31px;overflow:hidden"><div class="ui" style="left:0;top:6px;font-size:16px;color:#6f737a">e</div></div>
<div class="a" style="left:1520px;top:898px;width:14px;height:73px;border-radius:7px;background:#434446"></div>
<div class="a" style="left:1517px;top:949px;width:21px;height:3px;background:#8a8c90"></div>
<div class="a" style="left:760.5px;top:975px;width:777.5px;height:22px;background:#3e3f42"></div>
<div class="a" style="left:764px;top:979px;width:636px;height:13px;border-radius:7px;background:#56575a"></div>
<div class="a" style="left:636px;top:996px;width:904px;height:1px;background:#2b2d30"></div>
<div class="ui" id="td2b07dbd" style="left:647px;top:999.92px;font-size:19px;line-height:25px;color:#bcbec4;font-weight:normal;letter-spacing:0.250px;">error</div>
<div class="a" style="left:1540px;top:62px;width:60px;height:966px;background:#2b2d30"></div>
<svg class="ic" style="left:1554px;top:76px;" width="32" height="32" viewBox="0 0 32 32"><path d="M4.5 25.5 C6.5 21.5 8 19.5 8 13 C8 7.5 11.5 4 16 4 C20.5 4 24 7.5 24 13 C24 19.5 25.5 21.5 27.5 25.5 Z"/><path d="M13.2 28.8 H18.8 L16 31 Z" fill="#ced0d6" stroke-width="1"/></svg>
<div class="a" style="left:1574.5px;top:78px;width:11px;height:11px;border-radius:6px;background:#e05c5c;box-shadow:0 0 0 2px #2b2d30"></div>
<svg class="ic" style="left:1554px;top:137px;" width="32" height="32" viewBox="0 0 32 32"><ellipse cx="16" cy="8" rx="11" ry="4.5"/><path d="M5 8 V24 C5 26.5 10 28.5 16 28.5 C22 28.5 27 26.5 27 24 V8 M5 13.5 C5 16 10 18 16 18 C22 18 27 16 27 13.5 M5 19 C5 21.5 10 23.5 16 23.5 C22 23.5 27 21.5 27 19"/></svg>
<div class="a" style="left:0;top:1027.2px;width:1600px;height:1.8px;background:#1e1f22"></div>
<div class="a" style="left:0;top:1029px;width:1600px;height:52px;background:#2b2d30"></div>
<div class="a" style="left:21.3px;top:1045px;width:11.2px;height:11.2px;border:1.6px dotted #4d8cf5;border-radius:2.5px;background:#25324d"></div>
<div class="ui" id="tfb739c39" style="left:38.5px;top:1037.22px;font-size:19px;line-height:25px;color:#a8abb3;font-weight:normal;">/</div>
<div class="ui" id="t93ee71ae" style="left:82px;top:1037.22px;font-size:19px;line-height:25px;color:#a8abb3;font-weight:normal;letter-spacing:0.500px;">opt</div>
<div class="ui" id="tf1318665" style="left:146.5px;top:1037.22px;font-size:19px;line-height:25px;color:#a8abb3;font-weight:normal;letter-spacing:0.143px;">homebrew</div>
<div class="ui" id="t1361ddff" style="left:273.5px;top:1037.22px;font-size:19px;line-height:25px;color:#a8abb3;font-weight:normal;letter-spacing:0.500px;">opt</div>
<div class="ui" id="t648b0867" style="left:338.5px;top:1037.22px;font-size:19px;line-height:25px;color:#a8abb3;font-weight:normal;letter-spacing:1.000px;">go</div>
<div class="ui" id="tc2904971" style="left:396px;top:1037.22px;font-size:19px;line-height:25px;color:#a8abb3;font-weight:normal;letter-spacing:0.208px;">libexec</div>
<div class="ui" id="tbbcb43e5" style="left:493.5px;top:1037.22px;font-size:19px;line-height:25px;color:#a8abb3;font-weight:normal;letter-spacing:0.125px;">src</div>
<div class="ui" id="tced51a08" style="left:556.5px;top:1037.22px;font-size:19px;line-height:25px;color:#a8abb3;font-weight:normal;letter-spacing:0.333px;">builtin</div>
<svg class="ic" style="left:53.75px;top:1039.5px;" width="20" height="20" viewBox="0 0 20 20"><path d="M6.5 4.4 L12 10 L6.5 15.6" stroke="#a8abb3" stroke-width="1.5"/></svg>
<svg class="ic" style="left:118.75px;top:1039.5px;" width="20" height="20" viewBox="0 0 20 20"><path d="M6.5 4.4 L12 10 L6.5 15.6" stroke="#a8abb3" stroke-width="1.5"/></svg>
<svg class="ic" style="left:245px;top:1039.5px;" width="20" height="20" viewBox="0 0 20 20"><path d="M6.5 4.4 L12 10 L6.5 15.6" stroke="#a8abb3" stroke-width="1.5"/></svg>
<svg class="ic" style="left:310px;top:1039.5px;" width="20" height="20" viewBox="0 0 20 20"><path d="M6.5 4.4 L12 10 L6.5 15.6" stroke="#a8abb3" stroke-width="1.5"/></svg>
<svg class="ic" style="left:369px;top:1039.5px;" width="20" height="20" viewBox="0 0 20 20"><path d="M6.5 4.4 L12 10 L6.5 15.6" stroke="#a8abb3" stroke-width="1.5"/></svg>
<svg class="ic" style="left:465.75px;top:1039.5px;" width="20" height="20" viewBox="0 0 20 20"><path d="M6.5 4.4 L12 10 L6.5 15.6" stroke="#a8abb3" stroke-width="1.5"/></svg>
<svg class="ic" style="left:528.25px;top:1039.5px;" width="20" height="20" viewBox="0 0 20 20"><path d="M6.5 4.4 L12 10 L6.5 15.6" stroke="#a8abb3" stroke-width="1.5"/></svg>
<svg class="ic" style="left:616.25px;top:1039.5px;" width="20" height="20" viewBox="0 0 20 20"><path d="M6.5 4.4 L12 10 L6.5 15.6" stroke="#a8abb3" stroke-width="1.5"/></svg>
<svg class="" style="left:648px;top:1039.5px;" width="18" height="20" viewBox="0 0 18 20"><circle cx="2" cy="2.5" r="1.3" fill="#5ba5ea"/><circle cx="16" cy="2.5" r="1.3" fill="#5ba5ea"/><circle cx="1.5" cy="12.5" r="1.1" fill="#e39a5f"/><circle cx="16.5" cy="12.5" r="1.1" fill="#e39a5f"/><circle cx="3.5" cy="19.3" r="1.1" fill="#e39a5f"/><circle cx="14.5" cy="19.3" r="1.1" fill="#e39a5f"/><path d="M9 0.3 C13.5 0.3 16.5 3 16.5 8 V14 C16.5 18 13.5 20 9 20 C4.5 20 1.5 18 1.5 14 V8 C1.5 3 4.5 0.3 9 0.3 Z" fill="#5aa3e8"/><circle cx="5.6" cy="5.3" r="2.4" fill="#fff"/><circle cx="12.4" cy="5.3" r="2.4" fill="#fff"/><circle cx="5.2" cy="5.3" r="1" fill="#111"/><circle cx="12" cy="5.3" r="1" fill="#111"/><path d="M8 8 h2 v1.5 h-2 Z" fill="#e8d8c8"/></svg>
<div class="ui" id="t259f632f" style="left:675px;top:1037.22px;font-size:19px;line-height:25px;color:#a8abb3;font-weight:normal;letter-spacing:0.222px;">builtin.go</div>
<div class="ui" id="t0fc77c58" style="left:1044px;top:1041.92px;font-size:19px;line-height:25px;color:#a8abb3;font-weight:normal;letter-spacing:-1.000px;">{...}</div>
<div class="ui" id="t25ebbb3f" style="left:1105px;top:1041.92px;font-size:19px;line-height:25px;color:#a8abb3;font-weight:normal;letter-spacing:0.300px;">280:6</div>
<div class="ui" id="tcb87277d" style="left:1190px;top:1041.92px;font-size:19px;line-height:25px;color:#a8abb3;font-weight:normal;letter-spacing:-2.000px;">LF</div>
<div class="ui" id="tbb8864a8" style="left:1246px;top:1041.92px;font-size:19px;line-height:25px;color:#a8abb3;font-weight:normal;letter-spacing:0.625px;">UTF-8</div>
<div class="ui" id="t6628668f" style="left:1338px;top:1041.62px;font-size:19px;line-height:25px;color:#a8abb3;font-weight:normal;letter-spacing:0.150px;">2 spaces*</div>
<svg class="ic" style="left:1420px;top:1040px;" width="30" height="30" viewBox="0 0 30 30"><path d="M14 25.7 H10.3 a2.5 2.5 0 0 1 -2.5 -2.5 V10.5 L13 4.8 H19.5 a2.5 2.5 0 0 1 2.5 2.5 V14.5 M7.8 10.5 H11 a2 2 0 0 0 2 -2 V4.8" stroke="#ced0d6" stroke-width="1.6"/></svg>
<svg class="ic" style="left:1420px;top:1040px;" width="30" height="30" viewBox="0 0 30 30"><path d="M25.10 21.00 L25.09 21.36 L25.07 21.72 L25.73 22.27 L26.33 22.94 L26.17 23.41 L25.94 23.85 L25.67 24.27 L25.34 24.65 L24.46 24.46 L23.65 24.16 L23.35 24.36 L23.05 24.55 L22.73 24.72 L22.41 24.88 L22.27 25.73 L21.98 26.59 L21.50 26.68 L21.00 26.70 L20.50 26.68 L20.02 26.59 L19.73 25.73 L19.59 24.88 L19.27 24.72 L18.95 24.55 L18.65 24.36 L18.35 24.16 L17.54 24.46 L16.66 24.65 L16.33 24.27 L16.06 23.85 L15.83 23.41 L15.67 22.94 L16.27 22.27 L16.93 21.72 L16.91 21.36 L16.90 21.00 L16.91 20.64 L16.93 20.28 L16.27 19.73 L15.67 19.06 L15.83 18.59 L16.06 18.15 L16.33 17.73 L16.66 17.35 L17.54 17.54 L18.35 17.84 L18.65 17.64 L18.95 17.45 L19.27 17.28 L19.59 17.12 L19.73 16.27 L20.02 15.41 L20.50 15.32 L21.00 15.30 L21.50 15.32 L21.98 15.41 L22.27 16.27 L22.41 17.12 L22.73 17.28 L23.05 17.45 L23.35 17.64 L23.65 17.84 L24.46 17.54 L25.34 17.35 L25.67 17.73 L25.94 18.15 L26.17 18.59 L26.33 19.06 L25.73 19.73 L25.07 20.28 L25.09 20.64 Z" stroke="#ced0d6" stroke-width="1.6" fill="#2b2d30"/><circle cx="21" cy="21" r="1.1" fill="#dfe1e5" stroke="none"/></svg>
<svg class="ic" style="left:1480px;top:1040px;" width="30" height="30" viewBox="0 0 30 30"><rect x="8.2" y="12.7" width="13.8" height="11" rx="2"/><path d="M17.5 12.7 V9.5 C17.5 6.3 26.7 6.3 26.7 9.5 V13.2 M15 15.2 V19.5" stroke-width="1.7"/></svg>
<div class="a" style="left:1544.2px;top:1044.2px;width:21.2px;height:21.2px;border-radius:11px;background:#db5c5c"></div>
<div class="a" style="left:1553.5px;top:1048.5px;width:2.6px;height:8.2px;border-radius:1.3px;background:#fff"></div>
<div class="a" style="left:1553.4px;top:1058.5px;width:2.8px;height:2.8px;border-radius:2px;background:#fff"></div>
</div></div><div id="bord"></div></body></html>
